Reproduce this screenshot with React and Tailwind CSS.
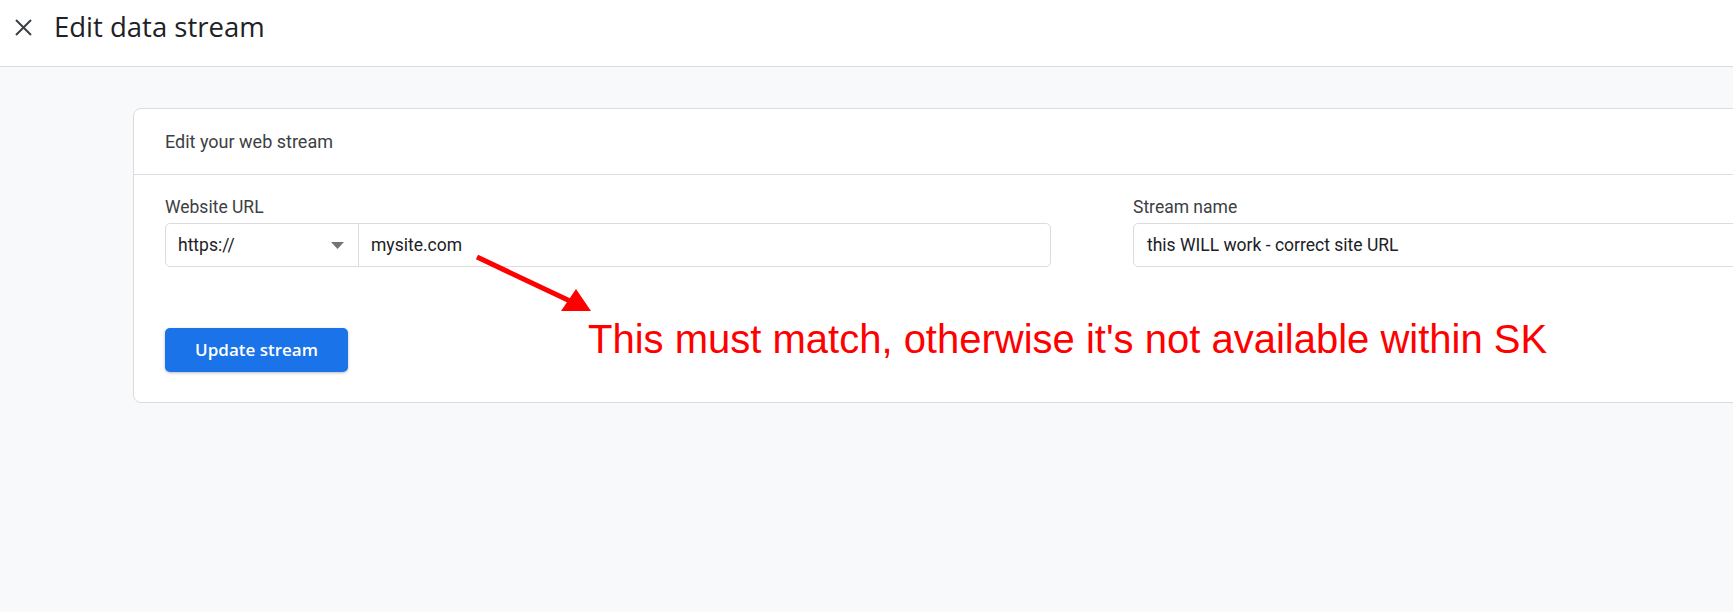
import React from 'react';

const body = { fontFamily: 'Roboto, "Noto Sans", Arial, sans-serif' };
const heading = { fontFamily: '"Open Sans", Roboto, Arial, sans-serif' };

function Field({ label, children }) {
  return (
    <div>
      <div className="text-[17.5px] leading-5 text-[#3c4043] mb-[6px]">{label}</div>
      {children}
    </div>
  );
}

export default function App() {
  return (
    <div className="relative w-full min-h-[612px] bg-[#f8f9fa] overflow-hidden" style={body}>
      <header className="h-[67px] bg-white border-b border-[#dadce0]">
        <div className="flex items-center h-[54px] pl-[15px]">
          <button className="w-[17px] h-[17px] flex items-center justify-center">
            <svg width="17" height="17" viewBox="0 0 17 17">
              <path d="M1 1L16 16M16 1L1 16" stroke="#3c4043" strokeWidth="2" />
            </svg>
          </button>
          <h1 className="ml-[22px] text-[27.5px] leading-none text-[#202124]" style={heading}>Edit data stream</h1>
        </div>
      </header>

      <div className="ml-[133px] mt-[41px] w-[1918px] bg-white border border-[#dadce0] rounded-lg">
        <div className="h-[66px] flex items-center px-[31px] border-b border-[#dadce0]">
          <span className="text-[18px] text-[#3c4043]">Edit your web stream</span>
        </div>

        <div className="px-[31px] pt-[22px] pb-[30px]">
          <div className="grid grid-cols-2 gap-[82px]">
            <Field label="Website URL">
              <div className="flex h-[44px] border border-[#dadce0] rounded-[5px]">
                <div className="w-[193px] flex items-center justify-between pl-[12px] pr-[14px] border-r border-[#dadce0] text-[17.5px] text-[#202124]">
                  <span>https://</span>
                  <svg width="13" height="7" viewBox="0 0 13 7"><path d="M0 0h13L6.5 7z" fill="#757575" /></svg>
                </div>
                <div className="flex-1 flex items-center pl-[12px] text-[17.5px] text-[#202124]">mysite.com</div>
              </div>
            </Field>
            <Field label="Stream name">
              <div className="flex items-center h-[44px] border border-[#dadce0] rounded-[5px] pl-[13px] text-[17.5px] text-[#202124]">
                this WILL work - correct site URL
              </div>
            </Field>
          </div>

          <button className="mt-[61px] w-[183px] h-[44px] rounded-[5px] bg-[#1a73e8] text-white text-[17px] font-semibold shadow-[0_1px_3px_rgba(60,64,67,0.35)]" style={heading}>
            Update stream
          </button>
        </div>
      </div>

      <svg className="absolute left-0 top-0 pointer-events-none" width="700" height="340">
        <line x1="477" y1="257" x2="570" y2="301" stroke="#ff0000" strokeWidth="5" />
        <polygon points="561,311 576,289 591,311" fill="#ff0000" />
      </svg>
      <div className="absolute left-[588px] top-[319px] text-[40px] leading-none text-[#ff0000] whitespace-nowrap" style={{ fontFamily: '"Liberation Sans", Arial, sans-serif' }}>
        This must match, otherwise it's not available within SK
      </div>
    </div>
  );
}
